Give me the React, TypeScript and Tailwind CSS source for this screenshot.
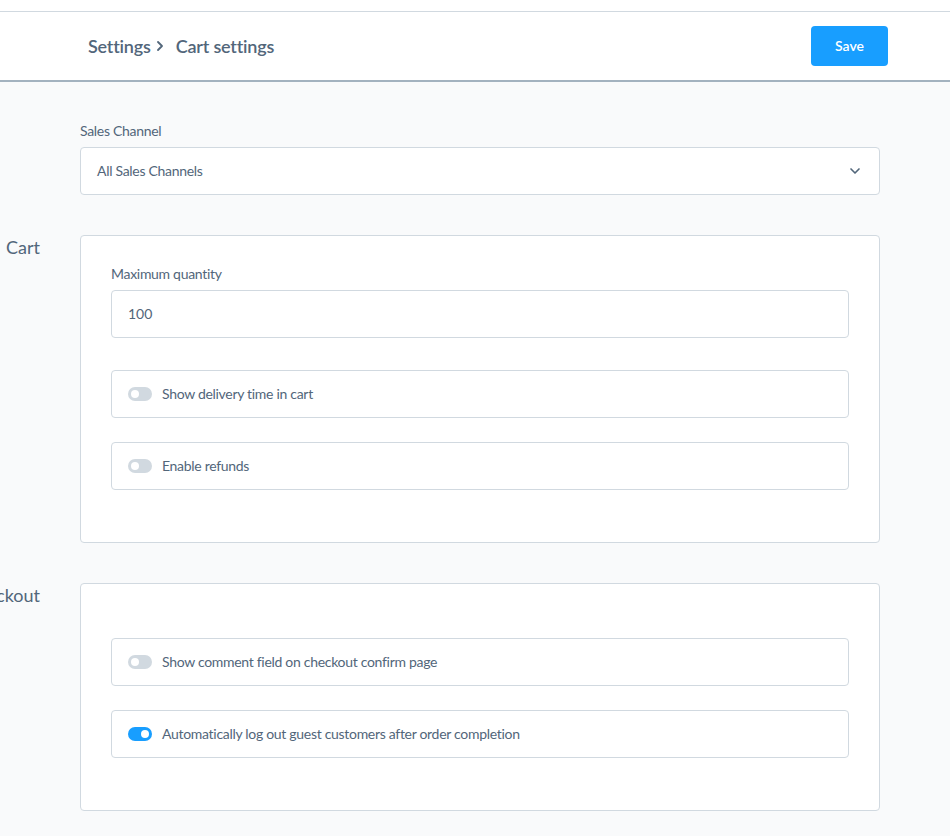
import { ChevronRight, ChevronDown } from "lucide-react";

const font = { fontFamily: "Lato, 'Liberation Sans', sans-serif" };

function Toggle({ label, on = false }: { label: string; on?: boolean }) {
  return (
    <div className="flex h-12 items-center rounded border border-[#d1d9e0] bg-white px-4">
      <span
        className={`flex h-[14px] w-6 items-center rounded-full px-[3px] ${
          on ? "justify-end bg-[#189eff]" : "justify-start bg-[#d1d9e0]"
        }`}
      >
        <span className="h-2 w-2 rounded-full bg-white" />
      </span>
      <span className="ml-2.5 text-sm tracking-[-0.3px] text-[#52667a]">{label}</span>
    </div>
  );
}

// Left title column is narrow on purpose: long titles ("Checkout") run off the left edge.
function Section({ title, children }: { title: string; children: React.ReactNode }) {
  return (
    <div className="flex gap-10">
      <div className="flex w-10 shrink-0 justify-end">
        <span className="whitespace-nowrap text-lg leading-6 text-[#52667a]">{title}</span>
      </div>
      <div className="w-[800px] rounded border border-[#d1d9e0] bg-white px-[30px]">
        {children}
      </div>
    </div>
  );
}

export default function App() {
  return (
    <div className="min-h-[836px] overflow-hidden bg-[#f9fafb]" style={font}>
      <div className="h-[11px] bg-white" />
      <header className="flex h-[71px] items-center justify-between border-t border-b-2 border-t-[#d1d9e0] border-b-[#a3b2bf] bg-white pl-[88px] pr-[62px]">
        <h1 className="flex items-center text-lg font-semibold tracking-[-0.2px] text-[#52667a]">
          Settings
          <ChevronRight className="ml-px mr-2 h-4 w-4" strokeWidth={2.75} />
          Cart settings
        </h1>
        <button className="h-10 w-[77px] rounded bg-[#189eff] text-sm font-semibold text-white">
          Save
        </button>
      </header>

      <main className="flex flex-col gap-10 pt-[39px]">
        <div className="ml-20 w-[800px]">
          <label className="mb-1.5 block text-sm tracking-[-0.3px] text-[#52667a]">
            Sales Channel
          </label>
          <div className="flex h-12 items-center justify-between rounded border border-[#d1d9e0] bg-white pl-4 pr-4">
            <span className="text-sm tracking-[-0.3px] text-[#52667a]">All Sales Channels</span>
            <ChevronDown className="h-4 w-4 text-[#52667a]" strokeWidth={2.5} />
          </div>
        </div>

        <Section title="Cart">
          <div className="pb-[52px] pt-[28px]">
            <label className="mb-1.5 block text-sm tracking-[-0.3px] text-[#52667a]">
              Maximum quantity
            </label>
            <div className="flex h-12 items-center rounded border border-[#d1d9e0] bg-white px-4 text-sm text-[#52667a]">
              100
            </div>
            <div className="mt-8 flex flex-col gap-6">
              <Toggle label="Show delivery time in cart" />
              <Toggle label="Enable refunds" />
            </div>
          </div>
        </Section>

        <Section title="Checkout">
          <div className="flex flex-col gap-6 pb-[52px] pt-[54px]">
            <Toggle label="Show comment field on checkout confirm page" />
            <Toggle label="Automatically log out guest customers after order completion" on />
          </div>
        </Section>
      </main>
    </div>
  );
}
